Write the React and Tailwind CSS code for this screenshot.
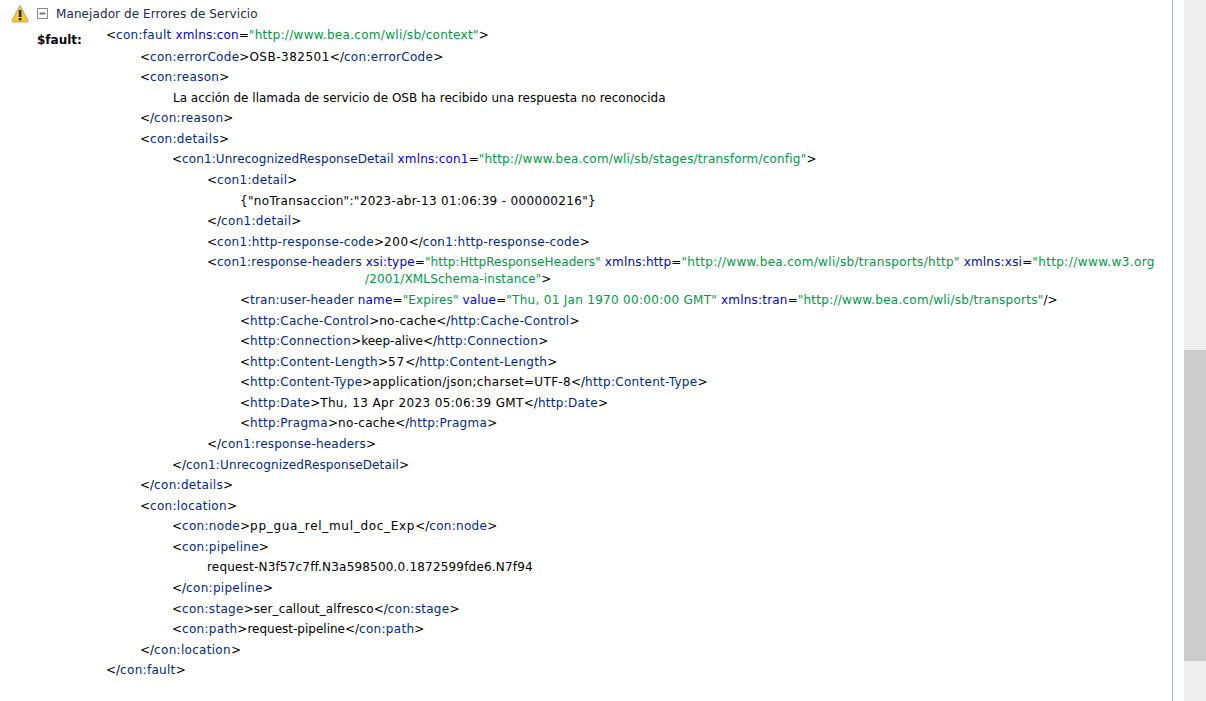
import React from 'react';

const Tag = ({ children, track = 'tracking-[0.3px]' }) => <span className={`text-[#002a8a] ${track}`}>{children}</span>;
const Attr = ({ children }) => <span className="text-[#0000e6] tracking-[0.2px]">{children}</span>;
const Val = ({ children, track = 'tracking-[0.3px]' }) => <span className={`text-[#009a46] ${track}`}>{children}</span>;

const Open = ({ name, close, track }) => (
  <>
    {close ? '</' : '<'}
    <Tag track={track}>{name}</Tag>
    {'>'}
  </>
);

const Leaf = ({ name, value, track }) => (
  <>
    <Open name={name} />
    <span className={track}>{value}</span>
    <Open name={name} close />
  </>
);

const Pair = ({ name, value, track }) => (
  <>
    {' '}
    <Attr>{name}</Attr>=<Val track={track}>"{value}"</Val>
  </>
);

const Row = ({ indent, children }) => {
  const pads = ['pl-[106px]', 'pl-[140px]', 'pl-[172px]', 'pl-[207px]', 'pl-[240px]'];
  return <div className={`h-[20.58px] leading-[20.58px] whitespace-pre ${pads[indent]}`}>{children}</div>;
};

export default function App() {
  return (
    <div className="w-[1206px] h-[701px] overflow-hidden bg-white flex text-black text-[12px] font-['DejaVu_Sans',sans-serif]">
      <div className="relative w-[1173px] h-full border-r border-[#a3b4cc]">
        {/* header */}
        <div className="h-[24.5px] flex items-center pl-[11px] pt-[3px]">
          <svg width="18" height="19" viewBox="0 0 18 19" className="-mt-[1px]">
            <path d="M9 1.5 L17 16.5 Q17.5 18 16 18 L2 18 Q0.5 18 1 16.5 Z" fill="#f7c92c" stroke="#b9a878" strokeWidth="1" strokeLinejoin="round" />
            <rect x="7.8" y="6" width="2.6" height="7" fill="#2a2a2a" />
            <rect x="7.8" y="14" width="2.6" height="2.4" fill="#2a2a2a" />
          </svg>
          <svg width="11" height="11" viewBox="0 0 11 11" className="ml-[8px]">
            <rect x="0.5" y="0.5" width="10" height="10" fill="#fff" stroke="#8a8a8a" />
            <rect x="2.5" y="4.5" width="6" height="2" fill="#777" />
          </svg>
          <span className="ml-[8px] text-[#1c2b45] tracking-[0.09px]">Manejador de Errores de Servicio</span>
        </div>

        <span className="absolute left-[37px] top-[31px] font-bold leading-[18px]">$fault:</span>

        <div className="mb-[1.5px]">
          <Row indent={0}>
            {'<'}<Tag>con:fault</Tag><Pair name="xmlns:con" value="http://www.bea.com/wli/sb/context" />{'>'}
          </Row>
        </div>
        <Row indent={1}><Leaf name="con:errorCode" value="OSB-382501" track="tracking-[0.5px]" /></Row>
        <Row indent={1}><Open name="con:reason" /></Row>
        <Row indent={2}><span className="ml-px">La acción de llamada de servicio de OSB ha recibido una respuesta no reconocida</span></Row>
        <Row indent={1}><Open name="con:reason" close /></Row>
        <Row indent={1}><Open name="con:details" /></Row>
        <Row indent={2}>
          {'<'}<Tag track="tracking-[0.1px]">con1:UnrecognizedResponseDetail</Tag><Pair name="xmlns:con1" value="http://www.bea.com/wli/sb/stages/transform/config" track="tracking-[0.2px]" />{'>'}
        </Row>
        <Row indent={3}><Open name="con1:detail" /></Row>
        <Row indent={4}><span className="tracking-[0.33px]">{'{"noTransaccion":"2023-abr-13 01:06:39 - 000000216"}'}</span></Row>
        <Row indent={3}><Open name="con1:detail" close /></Row>
        <Row indent={3}><Leaf name="con1:http-response-code" value="200" track="tracking-[0.6px]" /></Row>
        <Row indent={3}>
          {'<'}<Tag track="tracking-[0.2px]">con1:response-headers</Tag><Pair name="xsi:type" value="http:HttpResponseHeaders" track="tracking-[0.1px]" />
          <Pair name="xmlns:http" value="http://www.bea.com/wli/sb/transports/http" track="tracking-[0.32px]" />
          {' '}<Attr>xmlns:xsi</Attr>=<Val track="tracking-[0.4px]">"http://www.w3.org</Val>
        </Row>
        <div className="h-[17px] -mt-[3.5px] mb-[3.5px] leading-[20.58px] pl-[365px] whitespace-pre">
          <Val track="tracking-[0.14px]">/2001/XMLSchema-instance"</Val>{'>'}
        </div>
        <Row indent={4}>
          {'<'}<Tag track="tracking-[0.2px]">tran:user-header</Tag><Pair name="name" value="Expires" track="tracking-[0.1px]" />
          <Pair name="value" value="Thu, 01 Jan 1970 00:00:00 GMT" track="tracking-[0.3px]" />
          <Pair name="xmlns:tran" value="http://www.bea.com/wli/sb/transports" track="tracking-[0.26px]" />{'/>'}
        </Row>
        <Row indent={4}><Leaf name="http:Cache-Control" value="no-cache" track="tracking-[0.25px]" /></Row>
        <Row indent={4}><Leaf name="http:Connection" value="keep-alive" /></Row>
        <Row indent={4}><Leaf name="http:Content-Length" value="57" track="tracking-[1px]" /></Row>
        <Row indent={4}><Leaf name="http:Content-Type" value="application/json;charset=UTF-8" track="tracking-[0.33px]" /></Row>
        <Row indent={4}><Leaf name="http:Date" value="Thu, 13 Apr 2023 05:06:39 GMT" track="tracking-[0.37px]" /></Row>
        <Row indent={4}><Leaf name="http:Pragma" value="no-cache" track="tracking-[0.25px]" /></Row>
        <Row indent={3}><Open name="con1:response-headers" close track="tracking-[0.2px]" /></Row>
        <Row indent={2}><Open name="con1:UnrecognizedResponseDetail" close track="tracking-[0.14px]" /></Row>
        <Row indent={1}><Open name="con:details" close /></Row>
        <Row indent={1}><Open name="con:location" /></Row>
        <Row indent={2}><Leaf name="con:node" value="pp_gua_rel_mul_doc_Exp" track="tracking-[0.7px]" /></Row>
        <Row indent={2}><Open name="con:pipeline" /></Row>
        <Row indent={3}><span className="tracking-[0.19px]">request-N3f57c7ff.N3a598500.0.1872599fde6.N7f94</span></Row>
        <Row indent={2}><Open name="con:pipeline" close /></Row>
        <Row indent={2}><Leaf name="con:stage" value="ser_callout_alfresco" track="tracking-[0.1px]" /></Row>
        <Row indent={2}><Leaf name="con:path" value="request-pipeline" /></Row>
        <Row indent={1}><Open name="con:location" close /></Row>
        <Row indent={0}><Open name="con:fault" close /></Row>
      </div>

      {/* scrollbar */}
      <div className="ml-[11px] w-[22px] h-full bg-[#eeeeee]">
        <div className="h-[350px]" />
        <div className="h-[311px] bg-[#cccccc]" />
      </div>
    </div>
  );
}
